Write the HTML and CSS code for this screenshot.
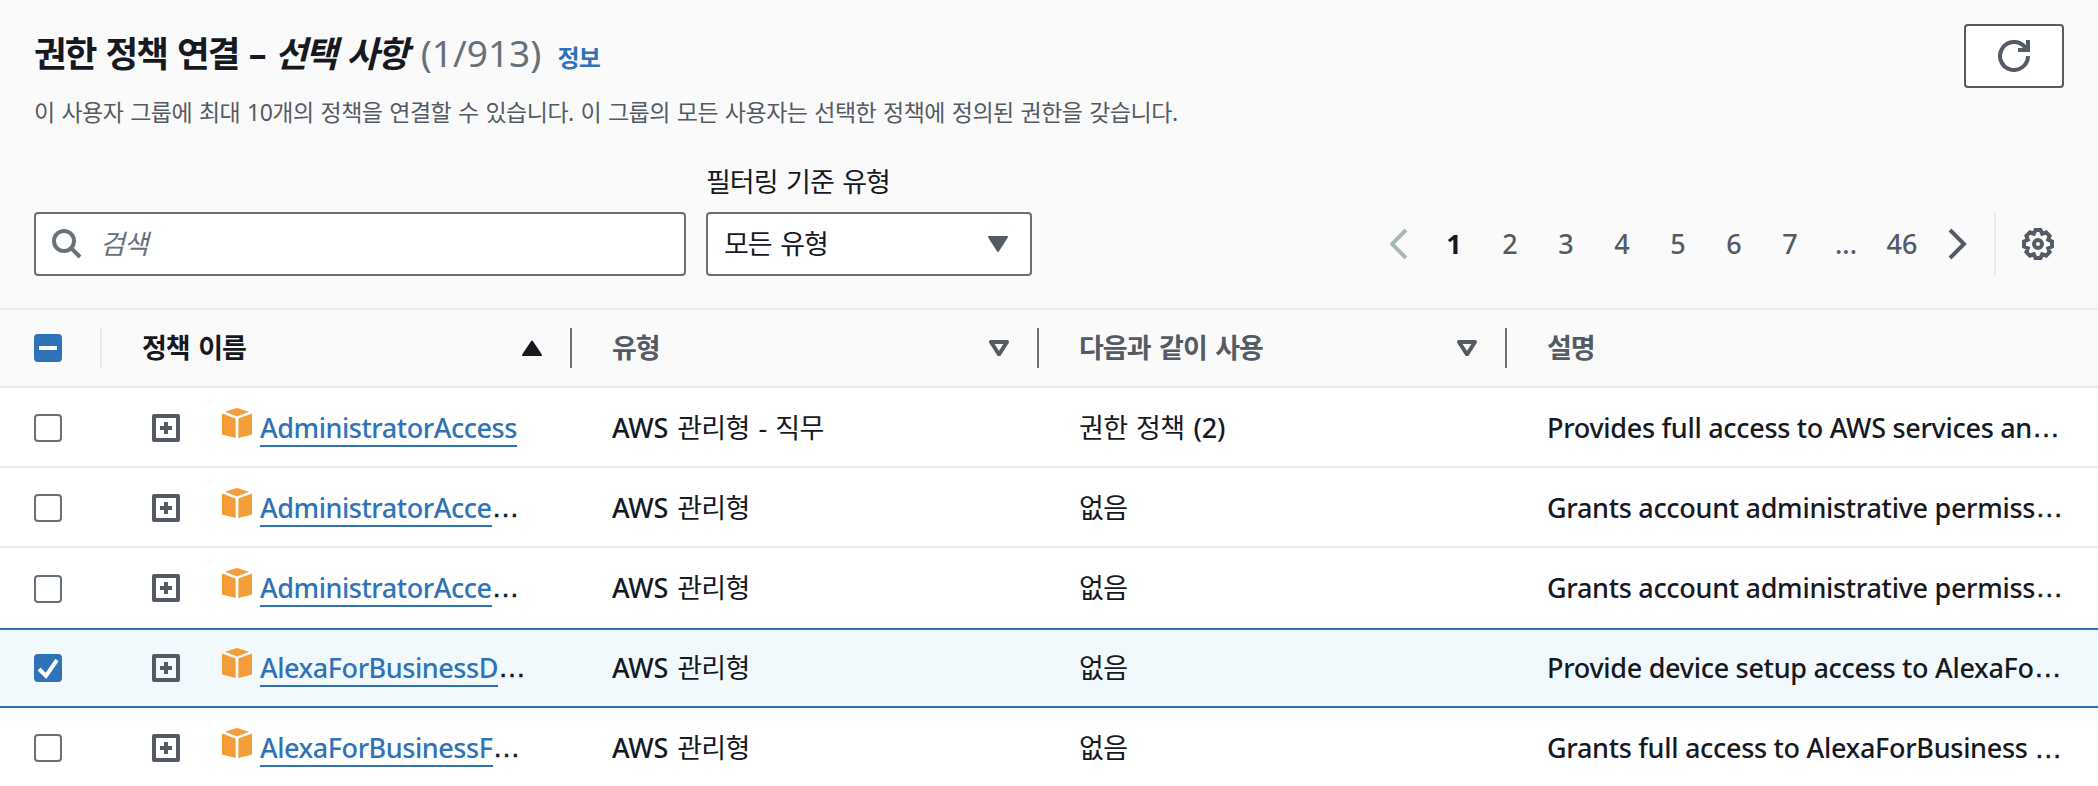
FILE: index.html
```html
<!DOCTYPE html>
<html lang="ko">
<head>
    <meta charset="utf-8">
    <title>권한 정책 연결</title>
    <link rel="stylesheet" href="styles.css">
</head>
<body>
    <svg class="defs" width="0" height="0">
        <symbol id="cube" viewBox="0 0 30 30">
            <path d="M15 0l12 3.8-12 4.7L3 3.8z M0 5.6l13.6 4.8V30L0 26.4z M30 5.6l-13.6 4.8V30L30 26.4z"/>
        </symbol>
        <symbol id="expand" viewBox="0 0 28 28">
            <path d="M2 2h24v24H2z M8 14h12 M14 8v12" fill="none" stroke="currentColor" stroke-width="4" stroke-linejoin="round"/>
        </symbol>
        <symbol id="sort" viewBox="0 0 20 16">
            <path d="M2 2h16l-8 12.5z" fill="none" stroke="currentColor" stroke-width="4" stroke-linejoin="round"/>
        </symbol>
    </svg>

    <div class="header">
        <div class="title-row">
            <h2><span class="title">권한 정책 연결 –</span> <em>선택 사항</em> <span class="counter">(1/913)</span> <a class="info">정보</a></h2>
            <button class="refresh">
                <svg width="32" height="32" viewBox="0 0 32 32" fill="none" stroke="currentColor" stroke-width="4">
                    <path d="M30 16a14 14 0 1 1-3-8.7L29 10"/><path d="M30 0v10H20"/>
                </svg>
            </button>
        </div>
        <p class="description">이 사용자 그룹에 최대 10개의 정책을 연결할 수 있습니다. 이 그룹의 모든 사용자는 선택한 정책에 정의된 권한을 갖습니다.</p>
        <div class="tools">
            <div class="search">
                <svg width="30" height="30" viewBox="0 0 30 30" fill="none" stroke="currentColor" stroke-width="4">
                    <circle cx="12" cy="12" r="10"/><path d="M19 19l9 9"/>
                </svg>
                <span>검색</span>
            </div>
            <div class="filter">
                <label>필터링 기준 유형</label>
                <div class="select">
                    <span>모든 유형</span>
                    <svg width="20" height="16" viewBox="0 0 20 16"><path d="M1 1h18l-9 14z" fill="currentColor" stroke="currentColor" stroke-width="2" stroke-linejoin="round"/></svg>
                </div>
            </div>
            <div class="pagination">
                <svg class="prev" width="18" height="32" viewBox="0 0 18 32"><path d="M16 2L2 16l14 14" fill="none" stroke="currentColor" stroke-width="4"/></svg>
                <span class="page current">1</span>
                <span class="page">2</span>
                <span class="page">3</span>
                <span class="page">4</span>
                <span class="page">5</span>
                <span class="page">6</span>
                <span class="page">7</span>
                <span class="page">...</span>
                <span class="page">46</span>
                <svg class="next" width="19" height="32" viewBox="0 0 19 32"><path d="M2 2l14 14L2 30" fill="none" stroke="currentColor" stroke-width="4"/></svg>
            </div>
            <div class="settings">
                <svg width="32" height="32" viewBox="0 0 32 32" fill="none" stroke="currentColor" stroke-width="4">
                    <path d="M13.5 2h5l1.7 3.8 3.9-1.4 3.5 3.5-1.4 3.9L30 13.5v5l-3.8 1.7 1.4 3.9-3.5 3.5-3.9-1.4L18.5 30h-5l-1.7-3.8-3.9 1.4-3.5-3.5 1.4-3.9L2 18.5v-5l3.8-1.7-1.4-3.9 3.5-3.5 3.9 1.4z"/><circle cx="16" cy="16" r="4"/>
                </svg>
            </div>
        </div>
    </div>

    <div class="table">
        <div class="row head">
            <div class="cell check"><span class="checkbox mixed"><svg width="28" height="28"><path d="M5 14h18" stroke="#fff" stroke-width="4"/></svg></span></div>
            <div class="cell active"><span>정책 이름</span><svg width="20" height="16" viewBox="0 0 20 16"><path d="M10 1.5L19 15H1z" fill="currentColor" stroke="currentColor" stroke-width="2" stroke-linejoin="round"/></svg></div>
            <div class="cell"><span>유형</span><svg width="20" height="16"><use href="#sort"/></svg></div>
            <div class="cell"><span>다음과 같이 사용</span><svg width="20" height="16"><use href="#sort"/></svg></div>
            <div class="cell"><span>설명</span></div>
        </div>
        <div class="row">
            <div class="cell check"><span class="checkbox"></span></div>
            <div class="cell name"><svg class="expand"><use href="#expand"/></svg><svg class="cube"><use href="#cube"/></svg><a>AdministratorAccess</a></div>
            <div class="cell ko"><span>AWS <i>관리형 - 직무</i></span></div>
            <div class="cell ko"><span><i>권한 정책</i> (2)</span></div>
            <div class="cell">Provides full access to AWS services an<span class="dots">…</span></div>
        </div>
        <div class="row">
            <div class="cell check"><span class="checkbox"></span></div>
            <div class="cell name"><svg class="expand"><use href="#expand"/></svg><svg class="cube"><use href="#cube"/></svg><a>AdministratorAcce</a><span class="dots">…</span></div>
            <div class="cell ko"><span>AWS <i>관리형</i></span></div>
            <div class="cell ko"><i>없음</i></div>
            <div class="cell">Grants account administrative permiss<span class="dots">…</span></div>
        </div>
        <div class="row before-selected">
            <div class="cell check"><span class="checkbox"></span></div>
            <div class="cell name"><svg class="expand"><use href="#expand"/></svg><svg class="cube"><use href="#cube"/></svg><a>AdministratorAcce</a><span class="dots">…</span></div>
            <div class="cell ko"><span>AWS <i>관리형</i></span></div>
            <div class="cell ko"><i>없음</i></div>
            <div class="cell">Grants account administrative permiss<span class="dots">…</span></div>
        </div>
        <div class="row selected">
            <div class="cell check"><span class="checkbox checked"><svg width="28" height="28"><path d="M5 15l7 7L23 6" fill="none" stroke="#fff" stroke-width="4"/></svg></span></div>
            <div class="cell name"><svg class="expand"><use href="#expand"/></svg><svg class="cube"><use href="#cube"/></svg><a>AlexaForBusinessD</a><span class="dots">…</span></div>
            <div class="cell ko"><span>AWS <i>관리형</i></span></div>
            <div class="cell ko"><i>없음</i></div>
            <div class="cell">Provide device setup access to AlexaFo<span class="dots">…</span></div>
        </div>
        <div class="row">
            <div class="cell check"><span class="checkbox"></span></div>
            <div class="cell name"><svg class="expand"><use href="#expand"/></svg><svg class="cube"><use href="#cube"/></svg><a>AlexaForBusinessF</a><span class="dots">…</span></div>
            <div class="cell ko"><span>AWS <i>관리형</i></span></div>
            <div class="cell ko"><i>없음</i></div>
            <div class="cell"><span>Grants full access to AlexaForBusiness <span class="dots">…</span></span></div>
        </div>
    </div>
</body>
</html>
```
FILE: styles.css
```css
* {
    box-sizing: border-box;
}
body {
    margin: 0;
    height: 786px;
    overflow: hidden;
    background-color: #fff;
    color: #16191f;
    font-family: "Noto Sans", "Noto Sans CJK KR", sans-serif;
    font-size: 27px;
    line-height: 40px;
}
svg {
    display: block;
    flex-shrink: 0;
}
.defs {
    position: absolute;
}
.header {
    height: 308px;
    padding: 24px 34px 0;
    background-color: #fafafa;
}
.title-row {
    display: flex;
    justify-content: space-between;
    height: 64px;
}
h2 {
    margin: 0;
    font-size: 35.5px;
    line-height: 58px;
    letter-spacing: -2px;
    word-spacing: 3px;
    white-space: pre;
}
.counter {
    margin-left: 3px;
    color: #687078;
    font-size: 37px;
    font-weight: 400;
    letter-spacing: 0;
}
.info {
    margin-left: 6px;
    color: #2e73b8;
    font-size: 24px;
    letter-spacing: -1px;
}
.refresh {
    display: flex;
    align-items: center;
    justify-content: center;
    width: 100px;
    height: 64px;
    padding: 0;
    border: 2px solid #545b64;
    border-radius: 4px;
    background-color: #fff;
    color: #545b64;
}
.description {
    margin: 6px 0 0;
    color: #545b64;
    font-size: 23px;
    line-height: 36px;
    letter-spacing: -0.5px;
    word-spacing: 1.3px;
    white-space: nowrap;
}
.tools {
    display: flex;
    align-items: flex-end;
    height: 146px;
}
.search, .select {
    display: flex;
    align-items: center;
    height: 64px;
    border: 2px solid #687078;
    border-radius: 4px;
    background-color: #fff;
}
.search {
    width: 652px;
    margin-right: 20px;
    padding-left: 16px;
    gap: 18px;
    color: #687078;
    font-style: italic;
    letter-spacing: -1px;
}
.filter {
    width: 326px;
    letter-spacing: -1px;
    word-spacing: 2.5px;
}
.filter label {
    display: block;
    margin-bottom: 10px;
}
.select {
    justify-content: space-between;
    padding: 0 22px 0 16px;
}
.select svg {
    color: #545b64;
}
.pagination {
    display: flex;
    align-items: center;
    height: 64px;
    margin-left: auto;
    color: #545b64;
    font-weight: 500;
}
.page {
    width: 56px;
    text-align: center;
}
.current {
    color: #16191f;
    font-weight: 700;
}
.prev {
    margin-right: 18px;
    color: #aab7b8;
}
.next {
    margin-left: 18px;
}
.settings {
    display: flex;
    align-items: center;
    height: 64px;
    margin-left: 27px;
    padding: 0 10px 0 26px;
    border-left: 2px solid #eaeded;
    color: #545b64;
}
.row {
    display: grid;
    grid-template-columns: 102px 470px 467px 468px 1fr;
    height: 80px;
    padding-top: 2px;
    border-bottom: 2px solid #eaeaea;
}
.cell {
    display: flex;
    align-items: center;
    min-width: 0;
    padding-left: 40px;
    font-weight: 500;
    letter-spacing: -0.3px;
    white-space: nowrap;
}
.cell.check {
    padding-left: 34px;
}
.ko {
    word-spacing: 2.5px;
}
.cell i {
    font-style: normal;
    font-weight: 400;
    letter-spacing: -0.7px;
}
.dots {
    font-family: "Liberation Sans", sans-serif;
    font-size: 28px;
    -webkit-text-stroke: 0.5px currentColor;
}
.head {
    padding-top: 0;
    border-top: 2px solid #eaeaea;
    background-color: #fafafa;
    color: #545b64;
}
.head .cell {
    justify-content: space-between;
    height: 40px;
    margin: 18px 0;
    padding-right: 28px;
    border-right: 2px solid #687078;
    font-weight: 700;
    letter-spacing: -1px;
    word-spacing: 2.5px;
}
.head .check {
    border-color: #eaeaea;
}
.head .active {
    color: #16191f;
}
.head .cell:last-child {
    border: 0;
}
.checkbox {
    width: 28px;
    height: 28px;
    border: 2px solid #687078;
    border-radius: 4px;
    background-color: #fff;
}
.mixed, .checked {
    border: 0;
    background-color: #2e73b8;
}
.name {
    padding-left: 50px;
}
.expand {
    width: 28px;
    height: 28px;
    color: #545b64;
}
.cube {
    width: 30px;
    height: 30px;
    margin: 0 8px 10px 42px;
    fill: #f29d38;
}
.name a {
    padding-top: 2px;
    border-bottom: 2px solid #2e73b8;
    color: #2e73b8;
    line-height: 34px;
    letter-spacing: -0.45px;
}
.before-selected {
    border-bottom-color: transparent;
}
.before-selected .checkbox {
    margin-top: 2px;
}
.selected {
    padding-top: 0;
    border-top: 2px solid #2e73b8;
    border-bottom-color: #2e73b8;
    background-color: #f2f9fd;
}
```
